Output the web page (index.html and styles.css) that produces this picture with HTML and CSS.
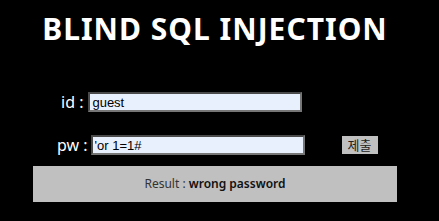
FILE: index.html
```html
<!DOCTYPE html>
<html lang="ko">
<head>
<meta charset="utf-8">
<title>BLIND SQL INJECTION</title>
<link rel="stylesheet" href="styles.css">
</head>
<body>
<div class="page">
  <h1 class="title">BLIND SQL INJECTION</h1>
  <form class="login">
    <div class="row row-id">
      <label class="label" for="id">id :</label>
      <input class="field" id="id" type="text" value="guest">
    </div>
    <div class="row row-pw">
      <label class="label" for="pw">pw :</label>
      <input class="field" id="pw" type="text" value="'or 1=1#">
      <button class="submit" type="button">제출</button>
    </div>
  </form>
  <div class="result">Result : <strong class="result-value">wrong password</strong></div>
</div>
</body>
</html>
```
FILE: styles.css
```css
html, body {
  margin: 0;
  padding: 0;
  background: #000;
}
.page {
  width: 430px;
  font-family: "Noto Sans", "Noto Sans CJK KR", sans-serif;
}
.title {
  margin: 8px 0 0;
  text-align: center;
  color: #fff;
  font-size: 30px;
  font-weight: 700;
  letter-spacing: 1px;
  line-height: 41px;
}
.login {
  margin-top: 43px;
}
.row {
  display: flex;
  align-items: center;
  height: 20px;
}
.row-id {
  padding-left: 61px;
}
.row-pw {
  margin-top: 23px;
  padding-left: 57px;
}
.label {
  color: #fff;
  font-size: 16px;
  margin-right: 5px;
}
.row-pw .label {
  margin-right: 3px;
}
.field {
  box-sizing: border-box;
  width: 214px;
  height: 20px;
  margin: 0;
  padding: 0 2px;
  border: 2px solid;
  border-color: #4a4a4a #767676 #767676 #4a4a4a;
  background: #e8f0fe;
  font-family: "Liberation Sans", Arial, sans-serif;
  font-size: 13px;
  color: #000;
}
.submit {
  margin: 0 0 0 37px;
  width: 36px;
  height: 18px;
  padding: 0;
  border: none;
  background: #c0c0c0;
  color: #222;
  font-family: "Noto Sans CJK KR", sans-serif;
  font-size: 13px;
  line-height: 18px;
}
.result {
  margin: 11px 0 0 33px;
  width: 364px;
  height: 36px;
  background: #c0c0c0;
  color: #333;
  font-size: 12px;
  line-height: 36px;
  text-align: center;
}
.result-value {
  color: #111;
  font-weight: 600;
}
```
